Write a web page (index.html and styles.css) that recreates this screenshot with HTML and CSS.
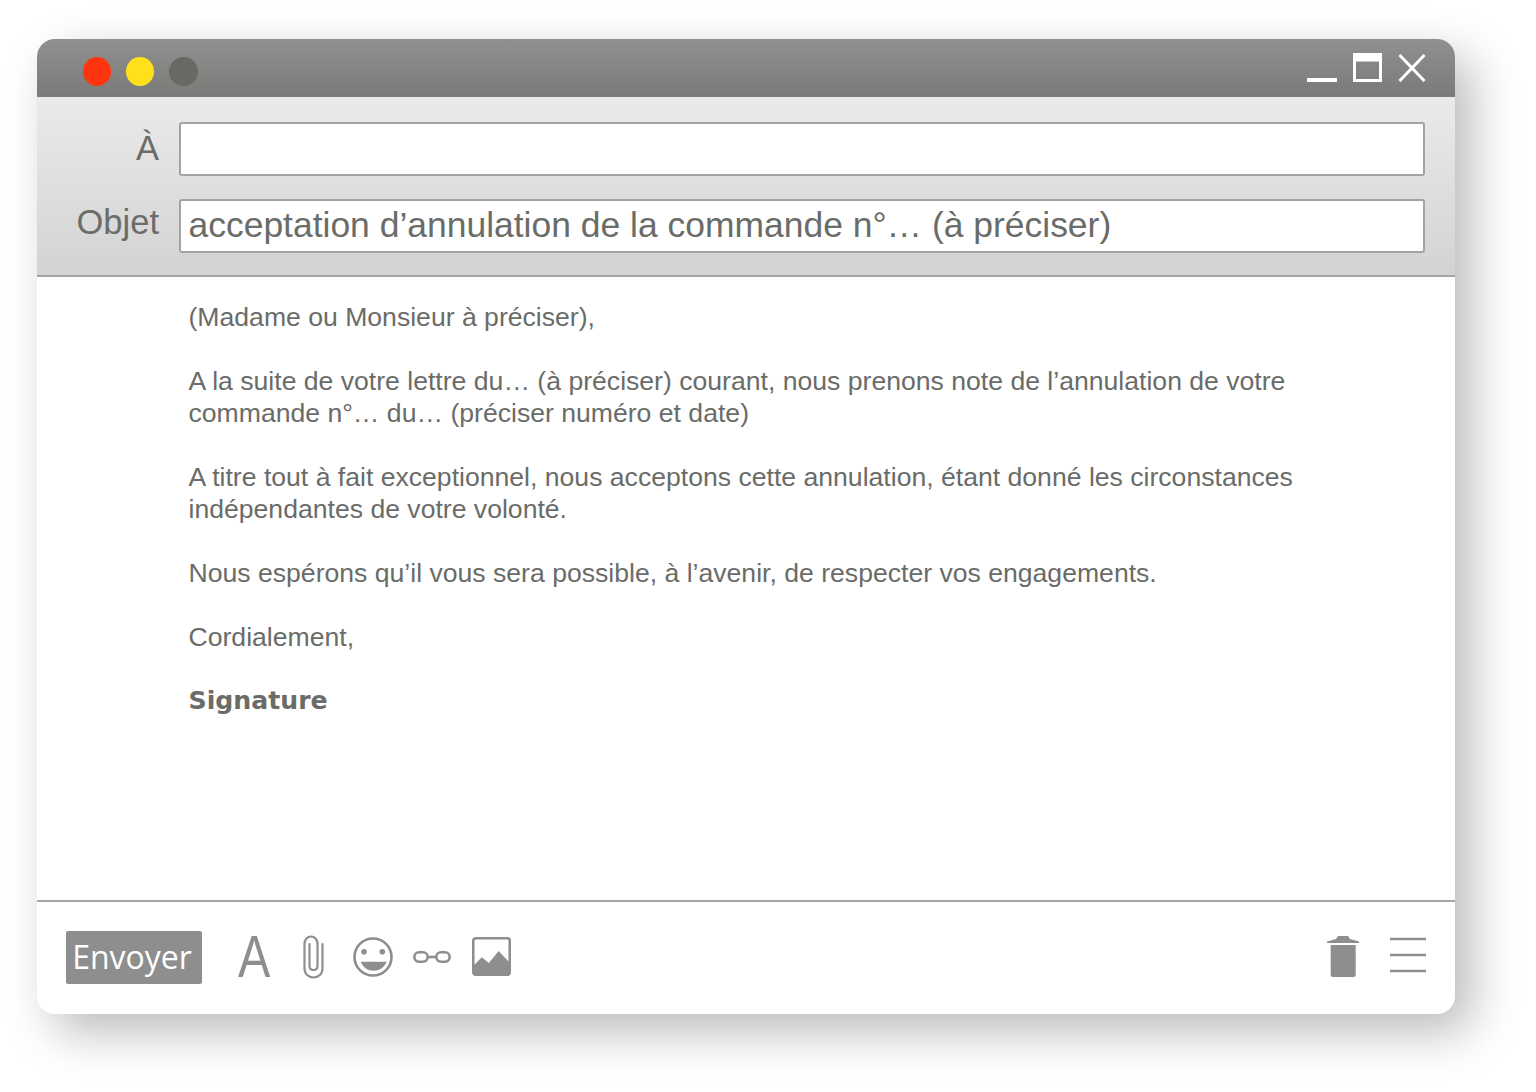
FILE: index.html
```html
<!DOCTYPE html>
<html lang="fr">
<head>
  <meta charset="UTF-8">
  <title>Nouveau message</title>
  <link rel="stylesheet" href="styles.css">
</head>
<body>

<div class="window">
  <div class="titlebar">
    <div class="lights">
      <span class="light red"></span>
      <span class="light yellow"></span>
      <span class="light green"></span>
    </div>
    <div class="controls">
      <svg class="ctrl-min" width="30" height="6" viewBox="0 0 30 6"><rect x="0" y="1" width="30" height="4" fill="#fff"/></svg>
      <svg width="29" height="29" viewBox="0 0 29 29"><path d="M0 0H29V29H0Z M3 8.500V26H26V8.500Z" fill="#fff" fill-rule="evenodd"/></svg>
      <svg width="28" height="28" viewBox="0 0 28 28"><path d="M1.500 1L26.500 27M26.500 1L1.500 27" stroke="#fff" stroke-width="3" fill="none"/></svg>
    </div>
  </div>

  <div class="fields">
    <div class="field">
      <label class="field-label label-to">À</label>
      <div class="field-box"></div>
    </div>
    <div class="field">
      <label class="field-label">Objet</label>
      <div class="field-box">acceptation d’annulation de la commande n°… (à préciser)</div>
    </div>
  </div>

  <div class="message">
    <p>(Madame ou Monsieur à préciser),</p>
    <p>A la suite de votre lettre du… (à préciser) courant, nous prenons note de l’annulation de votre<br>commande n°… du… (préciser numéro et date)</p>
    <p>A titre tout à fait exceptionnel, nous acceptons cette annulation, étant donné les circonstances<br>indépendantes de votre volonté.</p>
    <p>Nous espérons qu’il vous sera possible, à l’avenir, de respecter vos engagements.</p>
    <p>Cordialement,</p>
    <p class="signature">Signature</p>
  </div>

  <div class="toolbar">
    <div class="tools">
      <div class="send">Envoyer</div>
      <span class="font-a">A</span>
      <svg class="icon-clip" width="21" height="44" viewBox="0 0 21 44"><path d="M19.500 9V33.500C19.500 39 15.500 42.500 10.500 42.500C5.500 42.500 1.500 39 1.500 33.500V9C1.500 4.500 4.500 1.500 8 1.500C11.500 1.500 14.500 4.500 14.500 9V31C14.500 33.500 13 35 10.500 35C8 35 6.500 33.500 6.500 31V9" fill="none" stroke="#8e8e8e" stroke-width="2.200" stroke-linecap="round"/></svg>
      <svg class="icon-smile" width="40" height="40" viewBox="0 0 40 40"><circle cx="20" cy="20" r="18.500" fill="none" stroke="#8e8e8e" stroke-width="2.600"/><circle cx="11" cy="14.700" r="2.800" fill="#8e8e8e"/><circle cx="29.300" cy="14.700" r="2.800" fill="#8e8e8e"/><path d="M7.700 24.700H33.700C31.500 30.500 26 33.700 20.500 33.700C15 33.700 10 30.500 7.700 24.700Z" fill="#8e8e8e"/></svg>
      <svg class="icon-link" width="38" height="12" viewBox="0 0 38 12"><rect x="1.300" y="1.300" width="13.400" height="9.400" rx="4.700" fill="none" stroke="#8e8e8e" stroke-width="2.600"/><rect x="23.300" y="1.300" width="13.400" height="9.400" rx="4.700" fill="none" stroke="#8e8e8e" stroke-width="2.600"/><path d="M14 6H24" stroke="#8e8e8e" stroke-width="2.600"/></svg>
      <svg class="icon-image" width="39" height="39" viewBox="0 0 40 40"><rect x="1.300" y="1.300" width="37.400" height="37.400" rx="2.500" fill="none" stroke="#8e8e8e" stroke-width="2.600"/><path d="M1 30L10 20.700L17.300 26.700L27.300 14.300L39 26.700V36C39 38 38 39 36 39H4C2 39 1 38 1 36Z" fill="#8e8e8e"/></svg>
    </div>
    <div class="tools-right">
      <svg class="icon-trash" width="32" height="41" viewBox="0 0 32 41"><path d="M0 5.500L9 3L11 0H21L23 3L32 5.500V7H0Z" fill="#8e8e8e"/><path d="M3.700 9H28.700V39C28.700 40 28 41 26.700 41H5.700C4.500 41 3.700 40 3.700 39Z" fill="#8e8e8e"/></svg>
      <svg class="icon-menu" width="36" height="36" viewBox="0 0 36 36"><path d="M0 2H36M0 18H36M0 34H36" stroke="#8e8e8e" stroke-width="2.600"/></svg>
    </div>
  </div>
</div>

</body>
</html>
```

FILE: styles.css
```css
html, body {
  margin: 0;
  padding: 0;
  background: #fff;
}
body {
  font-family: "Liberation Sans", Arial, sans-serif;
  color: #6a6c68;
  height: 1092px;
  overflow: hidden;
  padding: 39px 0 0 37px;
  box-sizing: border-box;
}
.window {
  width: 1418px;
  height: 975px;
  border-radius: 18px;
  background: #fff;
  box-shadow: 17px 18px 48px rgba(0, 0, 0, 0.27);
  display: flex;
  flex-direction: column;
  overflow: hidden;
}
.titlebar {
  height: 58px;
  flex: none;
  background: linear-gradient(#909090, #7a7a78);
  display: flex;
  justify-content: space-between;
  align-items: center;
  padding: 0 29px 0 45.500px;
}
.lights {
  display: flex;
  gap: 14.800px;
  margin-top: 7px;
}
.light {
  width: 28.500px;
  height: 29px;
  border-radius: 50%;
}
.red { background: #ff3510; }
.yellow { background: #ffe01a; }
.green { background: #676a64; }
.controls {
  display: flex;
  align-items: flex-end;
  gap: 16px;
  height: 29px;
  margin-top: -1px;
}
.ctrl-min {
  margin-bottom: -1px;
}
.fields {
  flex: none;
  height: 180px;
  box-sizing: border-box;
  padding-top: 25px;
  background: linear-gradient(#eaeaea, #d3d3d3);
  border-bottom: 2px solid #a5a5a5;
  display: flex;
  flex-direction: column;
  gap: 23px;
}
.field {
  display: flex;
  align-items: center;
  padding-right: 30px;
}
.field-label {
  width: 122px;
  text-align: right;
  font-size: 34.500px;
  margin-top: -8px;
  flex: none;
}
.label-to {
  margin-top: -2px;
}
.field-box {
  flex: 1;
  margin-left: 19.500px;
  height: 54px;
  box-sizing: border-box;
  background: #fff;
  border: 2px solid #a3a3a3;
  border-radius: 3px;
  padding-left: 8px;
  font-size: 35.460px;
  line-height: 48px;
}
.message {
  flex: 1;
  padding: 24px 0 0 151.500px;
  font-size: 26.600px;
  line-height: 32px;
}
.message p {
  margin: 0 0 32px;
}
.signature {
  font-family: "DejaVu Sans", sans-serif;
  font-weight: bold;
  font-size: 25.200px;
}
.toolbar {
  flex: none;
  height: 114px;
  box-sizing: border-box;
  border-top: 2px solid #a5a5a5;
  display: flex;
  justify-content: space-between;
  align-items: center;
  padding: 0 29px 1px 29px;
}
.tools, .tools-right {
  display: flex;
  align-items: center;
}
.tools-right {
  gap: 31px;
}
.send {
  width: 132px;
  height: 53px;
  padding-right: 4px;
  background: #8e8e8e;
  border-radius: 2px;
  color: #fff;
  font-family: "Open Sans", sans-serif;
  font-size: 32px;
  line-height: 51px;
  text-align: center;
}
.font-a {
  color: #8e8e8e;
  font-size: 59px;
  line-height: 59px;
  width: 33px;
  margin-left: 36px;
  transform: scaleX(0.82);
  transform-origin: left center;
  margin-bottom: 1px;
}
.tools svg, .icon-trash {
  margin-bottom: 2px;
}
.icon-clip {
  margin-left: 32px;
}
.icon-smile {
  margin-left: 29px;
}
.icon-link {
  margin-left: 20px;
}
.icon-image {
  margin-left: 21px;
}
.icon-menu {
  margin-bottom: 5px;
}
```
